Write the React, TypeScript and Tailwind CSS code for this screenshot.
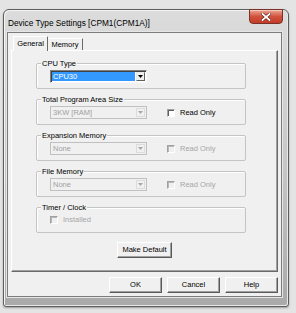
import React from "react";

function Arrow({ disabled }: { disabled?: boolean }) {
  return (
    <svg width="5" height="3" viewBox="0 0 5 3">
      <path d="M0 0H5L2.5 3Z" fill={disabled ? "#a8a8a8" : "#000"} />
    </svg>
  );
}

function Combo({ text, selected, disabled }: { text: string; selected?: boolean; disabled?: boolean }) {
  return (
    <div
      className={`w-[97px] h-[13px] flex border ${
        disabled
          ? "border-[#c0c0c0] bg-[#f0f0f0]"
          : "border-t-[#808080] border-l-[#808080] border-r-[#f8f8f8] border-b-[#f8f8f8] bg-white shadow-[inset_1px_1px_0_#404040]"
      }`}
    >
      <div className="flex-1 flex items-stretch p-[1px] pl-[1px]">
        <span
          className={`flex items-center px-[1px] leading-none ${selected ? "bg-[#3399ff] text-white flex-1" : ""} ${
            disabled ? "text-[#a0a0a0]" : ""
          }`}
        >
          {text}
        </span>
      </div>
      <div
        className={`w-[9px] my-[1px] mr-[1px] flex items-center justify-center border ${
          disabled
            ? "border-[#dcdcdc] bg-[#f0f0f0]"
            : "border-t-[#e8e8e8] border-l-[#e8e8e8] border-r-[#606060] border-b-[#606060] bg-[#f0f0f0]"
        }`}
      >
        <Arrow disabled={disabled} />
      </div>
    </div>
  );
}

function Check({ label, disabled }: { label: string; disabled?: boolean }) {
  return (
    <div className="flex items-center gap-[5px]">
      <div
        className={`w-[8px] h-[8px] border border-t-[#a0a0a0] border-l-[#a0a0a0] border-r-white border-b-white ${
          disabled ? "bg-[#f0f0f0] shadow-[inset_1px_1px_0_#b8b8b8]" : "bg-white shadow-[inset_1px_1px_0_#606060]"
        }`}
      />
      <span className={`leading-none ${disabled ? "text-[#a6a6a6]" : "text-black"}`}>{label}</span>
    </div>
  );
}

function Group({ label, children }: { label: string; children?: React.ReactNode }) {
  return (
    <div className="relative h-[26px] border border-[#c4c4c4] rounded-[2px] shadow-[inset_1px_1px_0_#ffffff] pl-[13px] pt-[6px]">
      <span className="absolute left-[4px] -top-[5px] bg-[#f0f0f0] px-[1px] leading-[9px] text-black">{label}</span>
      {children}
    </div>
  );
}

function Btn({ label, w }: { label: string; w: string }) {
  return (
    <div
      className={`${w} h-[16px] flex items-center justify-center border border-t-white border-l-white border-r-[#5a5a5a] border-b-[#5a5a5a] shadow-[inset_-1px_-1px_0_#a0a0a0] bg-[#f0f0f0] text-black leading-none`}
    >
      {label}
    </div>
  );
}

export default function App() {
  return (
    <div className="w-[296px] h-[313px] bg-[#e4e4e4] pt-[9px] pl-[3px] font-['Liberation_Sans',Arial,sans-serif] text-[7.5px] overflow-hidden">
      <div className="w-[286px] h-[298px] border border-[#5e5e5e] rounded-t-[6px] rounded-b-[3px] bg-gradient-to-b from-[#dcdcdc] via-[#c8c8c8] to-[#a9a9a9] shadow-[inset_1px_1px_0_#f4f4f4,inset_-1px_-1px_0_#e8e8e8,0_1px_2px_#9a9a9a] flex flex-col">
        <div className="h-[22px] flex items-start">
          <div className="flex-1 h-[19px] flex items-end pl-[4px] text-[8.3px] text-black">Device Type Settings [CPM1(CPM1A)]</div>
          <div className="w-[34px] h-[15px] mr-[5px] -mt-[1px] rounded-b-[4px] border border-[#7a3026] bg-gradient-to-b from-[#e9a796] via-[#d0523e] to-[#c23c27] shadow-[inset_0_1px_0_#f5c8bc] flex items-center justify-center">
            <svg width="10" height="8" viewBox="0 0 10 8">
              <path d="M1.5 1L8.5 7M8.5 1L1.5 7" stroke="#6a2418" strokeWidth="3.2" strokeLinecap="square" />
              <path d="M1.5 1L8.5 7M8.5 1L1.5 7" stroke="#ffffff" strokeWidth="1.8" strokeLinecap="square" />
            </svg>
          </div>
        </div>
        <div className="ml-[3px] w-[275px] h-[265px] border border-[#7c7c7c] bg-[#f0f0f0] shadow-[0_0_0_1px_#e6e6e6] flex flex-col pt-[3px]">
          <div className="ml-[5px] h-[14px] flex items-end relative z-10">
            <div className="w-[35px] h-[15px] -mb-[1px] bg-[#f0f0f0] border-t border-l border-r border-t-white border-l-white border-r-[#696969] rounded-t-[1px] flex items-center justify-center leading-none">
              General
            </div>
            <div className="w-[35px] h-[12px] bg-[#f0f0f0] border-t border-r border-t-white border-r-[#696969] flex items-center justify-center leading-none">
              Memory
            </div>
          </div>
          <div className="ml-[3px] w-[267px] h-[222px] border border-t-white border-l-white border-r-[#696969] border-b-[#696969] shadow-[inset_-1px_-1px_0_#a0a0a0] flex flex-col">
            <div className="pl-[24px] w-[234px] pt-[12px] flex flex-col gap-[10px]">
              <Group label="CPU Type">
                <Combo text="CPU30" selected />
              </Group>
              <Group label="Total Program Area Size">
                <div className="flex items-center gap-[20px]">
                  <Combo text="3KW [RAM]" disabled />
                  <Check label="Read Only" />
                </div>
              </Group>
              <Group label="Expansion Memory">
                <div className="flex items-center gap-[20px]">
                  <Combo text="None" disabled />
                  <Check label="Read Only" disabled />
                </div>
              </Group>
              <Group label="File Memory">
                <div className="flex items-center gap-[20px]">
                  <Combo text="None" disabled />
                  <Check label="Read Only" disabled />
                </div>
              </Group>
              <Group label="Timer / Clock">
                <div className="pt-[2px]">
                  <Check label="Installed" disabled />
                </div>
              </Group>
            </div>
            <div className="flex justify-center mt-[9px]">
              <Btn label="Make Default" w="w-[55px]" />
            </div>
          </div>
          <div className="flex justify-end gap-[5px] pr-[3px] mt-[5px]">
            <Btn label="OK" w="w-[53px]" />
            <Btn label="Cancel" w="w-[53px]" />
            <Btn label="Help" w="w-[53px]" />
          </div>
        </div>
      </div>
    </div>
  );
}
